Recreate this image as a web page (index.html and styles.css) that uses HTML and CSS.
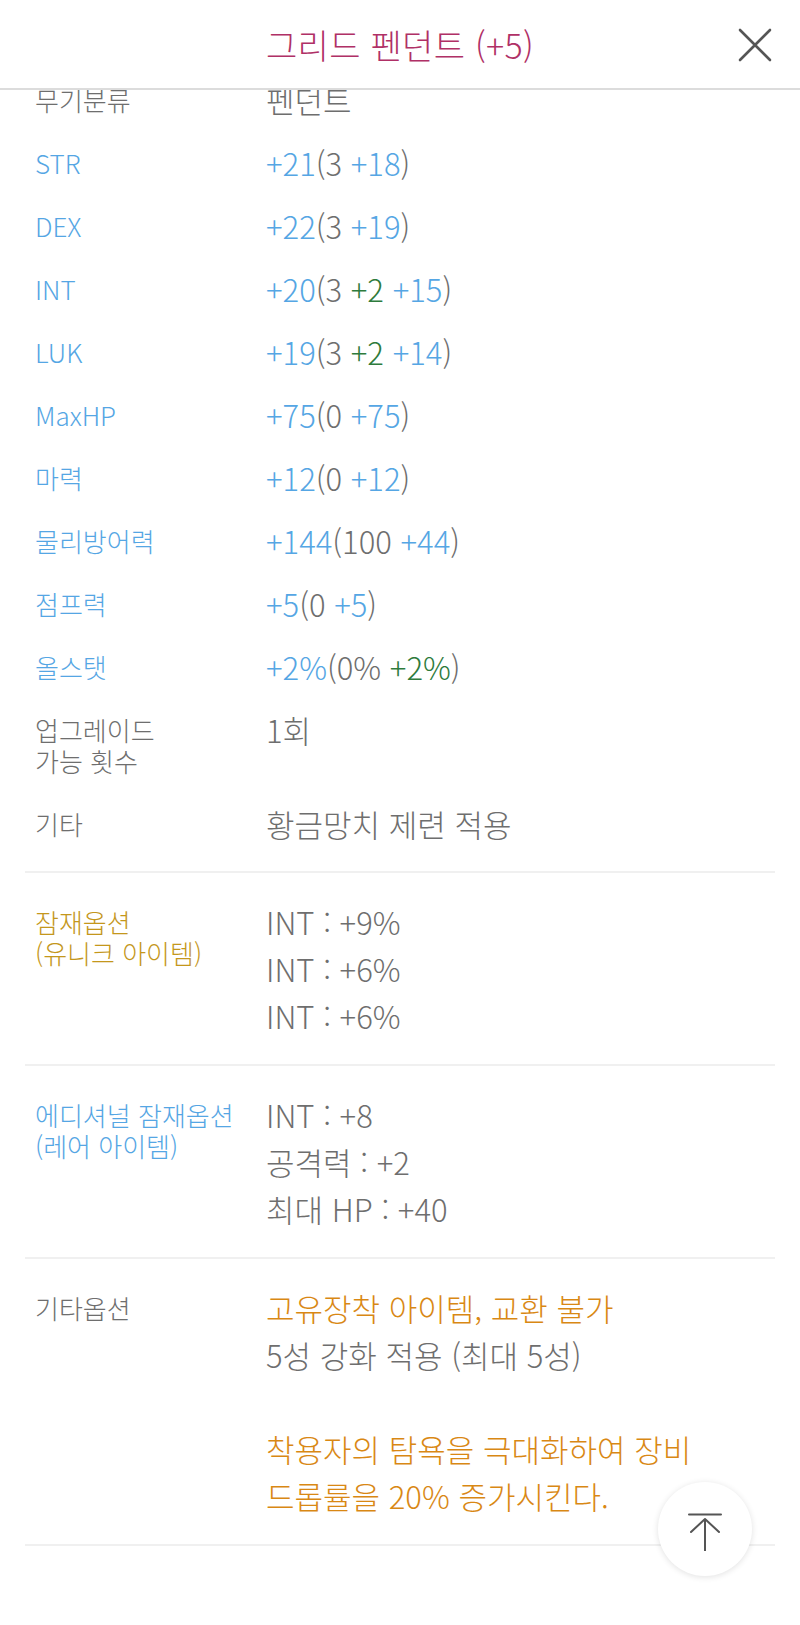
FILE: index.html
```html
<!DOCTYPE html>
<html lang="ko">
<head>
<meta charset="utf-8">
<title>그리드 펜던트 (+5)</title>
<link rel="stylesheet" href="styles.css">
</head>
<body>
<header class="topbar">
  <h1 class="title">그리드 펜던트 (+5)</h1>
  <button class="close" aria-label="닫기">
    <svg viewBox="0 0 34 34" width="34" height="34"><path d="M2 2 L32 32 M32 2 L2 32" fill="none" stroke="#555" stroke-width="2.6" stroke-linecap="round"/></svg>
  </button>
</header>

<main class="detail">
  <section class="group group-basic">
    <div class="row"><div class="label">무기분류</div><div class="value">펜던트</div></div>
    <div class="row"><div class="label blue">STR</div><div class="value"><span class="blue">+21</span>(3 <span class="blue">+18</span>)</div></div>
    <div class="row"><div class="label blue">DEX</div><div class="value"><span class="blue">+22</span>(3 <span class="blue">+19</span>)</div></div>
    <div class="row"><div class="label blue">INT</div><div class="value"><span class="blue">+20</span>(3 <span class="green">+2</span> <span class="blue">+15</span>)</div></div>
    <div class="row"><div class="label blue">LUK</div><div class="value"><span class="blue">+19</span>(3 <span class="green">+2</span> <span class="blue">+14</span>)</div></div>
    <div class="row"><div class="label blue">MaxHP</div><div class="value"><span class="blue">+75</span>(0 <span class="blue">+75</span>)</div></div>
    <div class="row"><div class="label blue">마력</div><div class="value"><span class="blue">+12</span>(0 <span class="blue">+12</span>)</div></div>
    <div class="row"><div class="label blue">물리방어력</div><div class="value"><span class="blue">+144</span>(100 <span class="blue">+44</span>)</div></div>
    <div class="row"><div class="label blue">점프력</div><div class="value"><span class="blue">+5</span>(0 <span class="blue">+5</span>)</div></div>
    <div class="row"><div class="label blue">올스탯</div><div class="value"><span class="blue">+2%</span>(0% <span class="green">+2%</span>)</div></div>
    <div class="row"><div class="label">업그레이드<br>가능 횟수</div><div class="value">1회</div></div>
    <div class="row"><div class="label">기타</div><div class="value">황금망치 제련 적용</div></div>
  </section>

  <section class="group group-opt">
    <div class="row">
      <div class="label gold">잠재옵션<br>(유니크 아이템)</div>
      <div class="value lines">
        <div>INT : +9%</div>
        <div>INT : +6%</div>
        <div>INT : +6%</div>
      </div>
    </div>
  </section>

  <section class="group group-opt">
    <div class="row">
      <div class="label blue">에디셔널 잠재옵션<br>(레어 아이템)</div>
      <div class="value lines">
        <div>INT : +8</div>
        <div>공격력 : +2</div>
        <div>최대 HP : +40</div>
      </div>
    </div>
  </section>

  <section class="group group-opt">
    <div class="row">
      <div class="label">기타옵션</div>
      <div class="value lines">
        <div class="orange">고유장착 아이템, 교환 불가</div>
        <div>5성 강화 적용 (최대 5성)</div>
        <div class="blank"></div>
        <div class="orange">착용자의 탐욕을 극대화하여 장비</div>
        <div class="orange">드롭률을 20% 증가시킨다.</div>
      </div>
    </div>
  </section>
</main>

<button class="to-top" aria-label="맨 위로">
  <svg viewBox="0 0 40 40" width="40" height="40"><path d="M4 3.5 H36 M20 8 V42 M6 21 L20 8 L34 21" fill="none" stroke="#555" stroke-width="2" stroke-linecap="round" stroke-linejoin="round"/></svg>
</button>
</body>
</html>
```

FILE: styles.css
```css
html, body {
  margin: 0;
  padding: 0;
  background: #fff;
}
body {
  font-family: "Noto Sans CJK KR", "Noto Sans", sans-serif;
  font-weight: 300;
  color: #6e6e6e;
  font-size: 26px;
}
.topbar {
  position: fixed;
  top: 0;
  left: 0;
  right: 0;
  height: 88px;
  background: #fff;
  border-bottom: 2px solid #dcdcdc;
  display: flex;
  align-items: center;
  justify-content: center;
  z-index: 10;
}
.title {
  margin: 0;
  font-size: 34px;
  font-weight: 300;
  color: #b03066;
  letter-spacing: 0.3px;
}
.close {
  position: absolute;
  right: 28px;
  top: 28px;
  width: 34px;
  height: 34px;
  padding: 0;
  border: 0;
  background: none;
}
.close svg { display: block; }

.detail {
  padding-top: 68px;
}
.group {
  margin: 0 25px;
  border-bottom: 2px solid #f0f0f0;
}
.group-basic {
  padding-bottom: 16px;
}
.row {
  display: grid;
  grid-template-columns: 231px 1fr;
  padding: 16px 0 16px 10px;
  line-height: 31px;
}
.group-opt {
  padding: 33px 0;
}
.group-opt .row {
  padding: 0 0 0 10px;
}
.label {
  white-space: nowrap;
}
.value {
  font-size: 31px;
  white-space: nowrap;
}
.lines {
  display: flex;
  flex-direction: column;
  gap: 16px;
}
.blank { height: 31px; }
.blue { color: #55a6e4; }
.green { color: #2e7b3c; }
.gold { color: #c4971c; }
.orange { color: #d98814; }

.to-top {
  position: fixed;
  right: 48px;
  bottom: 49px;
  width: 94px;
  height: 94px;
  border-radius: 50%;
  border: 0;
  padding: 0;
  background: #fff;
  box-shadow: 0 1px 6px rgba(0,0,0,0.12);
  display: flex;
  align-items: center;
  justify-content: center;
}
.to-top svg { display: block; margin-top: 4px; }
```
